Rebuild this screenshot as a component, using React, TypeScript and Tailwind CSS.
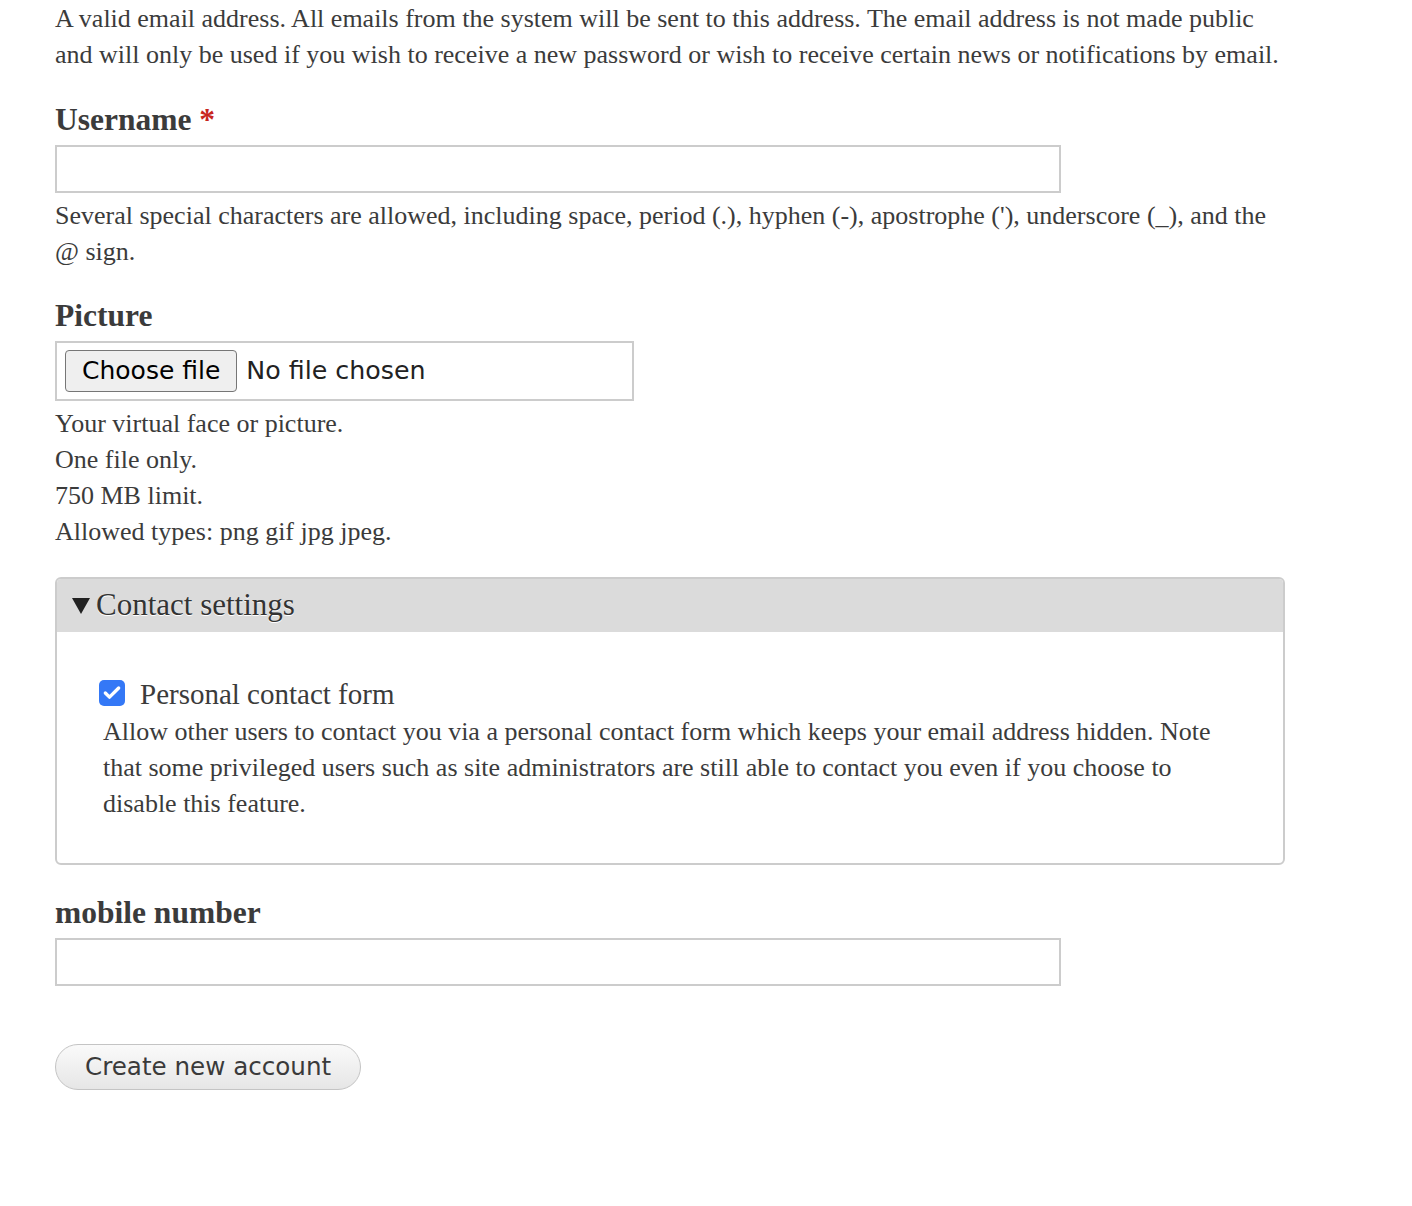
import { Check } from "lucide-react";

const serif = "font-['Liberation_Serif',serif]";
const sans = "font-['DejaVu_Sans',sans-serif]";

export default function App() {
  return (
    <div className={`min-h-[1206px] bg-white text-[#3b3b3b] ${serif}`}>
      <div className="pl-[55px] w-[1300px] pt-px">
        {/* Email description */}
        <p className="text-[26px] leading-[36px] whitespace-nowrap">
          A valid email address. All emails from the system will be sent to this address. The email address is not made public
          <br />
          and will only be used if you wish to receive a new password or wish to receive certain news or notifications by email.
        </p>

        {/* Username */}
        <div className="mt-[29px]">
          <label className="block text-[31.5px] leading-[36px] font-bold">
            Username <span className="text-[#c8261c]">*</span>
          </label>
          <input type="text" className="mt-[7px] block w-[1006px] h-[48px] border-2 border-[#cccccc] bg-white outline-none" />
          <p className="mt-[5px] text-[26px] leading-[36px] whitespace-nowrap">
            Several special characters are allowed, including space, period (.), hyphen (-), apostrophe ('), underscore (_), and the
            <br />@ sign.
          </p>
        </div>

        {/* Picture */}
        <div className="mt-[28px]">
          <label className="block text-[31.5px] leading-[36px] font-bold">Picture</label>
          <div className="mt-[7px] w-[579px] h-[60px] border-2 border-[#cccccc] flex items-center pl-[8px] gap-[9px]">
            <span className={`h-[42px] px-[16px] flex items-center bg-[#efefef] border border-[#767676] rounded-[4px] text-[25px] text-black ${sans}`}>
              Choose file
            </span>
            <span className={`text-[25.3px] text-[#222222] ${sans}`}>No file chosen</span>
          </div>
          <div className="mt-[5px] text-[26px] leading-[36px]">
            <p>Your virtual face or picture.</p>
            <p>One file only.</p>
            <p>750 MB limit.</p>
            <p>Allowed types: png gif jpg jpeg.</p>
          </div>
        </div>

        {/* Contact settings */}
        <div className="mt-[27px] w-[1230px] border-2 border-[#cccccc] rounded-[6px] overflow-hidden">
          <div className="h-[53px] bg-[#dbdbdb] flex items-center pl-[15px] text-[31px] text-[#333333] [text-shadow:0_1px_0_#fff]">
            <svg width="18" height="16" viewBox="0 0 18 16" className="mr-[6px] mt-[1px]">
              <path d="M0 0 H18 L9 16 Z" fill="#222222" />
            </svg>
            Contact settings
          </div>
          <div className="pt-[44px] pb-[41px] pl-[42px] pr-[40px]">
            <div className="flex items-center h-[36px]">
              <span className="w-[26px] h-[26px] rounded-[5px] bg-[#3478f6] flex items-center justify-center -mt-[3px]">
                <Check size={20} strokeWidth={4} color="#ffffff" />
              </span>
              <span className="ml-[15px] text-[29px] leading-[36px]">Personal contact form</span>
            </div>
            <p className="mt-[2px] pl-[4px] text-[26px] leading-[36px] whitespace-nowrap">
              Allow other users to contact you via a personal contact form which keeps your email address hidden. Note
              <br />
              that some privileged users such as site administrators are still able to contact you even if you choose to
              <br />
              disable this feature.
            </p>
          </div>
        </div>

        {/* Mobile number */}
        <div className="mt-[30px]">
          <label className="block text-[31.5px] leading-[36px] font-bold">mobile number</label>
          <input type="text" className="mt-[7px] block w-[1006px] h-[48px] border-2 border-[#cccccc] bg-white outline-none" />
        </div>

        <button
          className={`mt-[58px] h-[46px] px-[29px] rounded-full border border-[#c4c4c4] bg-gradient-to-b from-[#fafafa] to-[#e6e6e6] text-[24.6px] text-[#3a3a3a] ${sans}`}
        >
          Create new account
        </button>
      </div>
    </div>
  );
}
